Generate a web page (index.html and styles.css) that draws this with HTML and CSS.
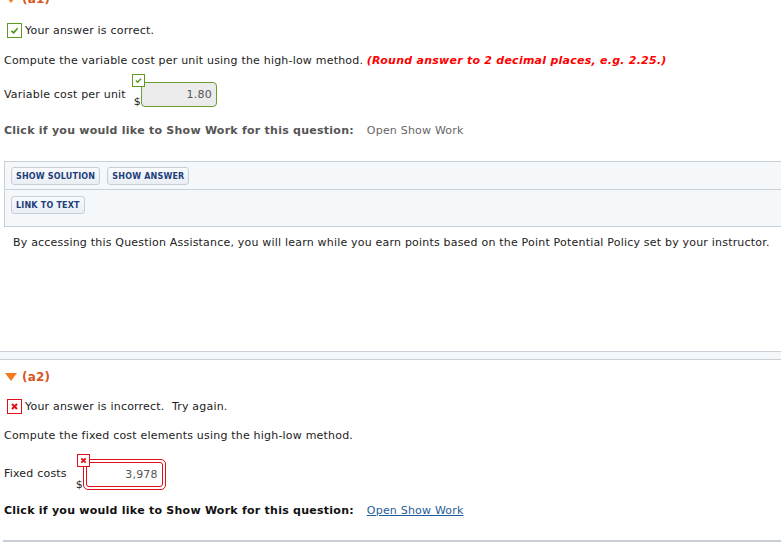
FILE: index.html
```html
<!DOCTYPE html>
<html>
<head>
<meta charset="utf-8">
<link rel="stylesheet" href="styles.css">
</head>
<body>
<div class="page">
  <div class="part-head part-head-first"><span class="tri"></span><span class="part-label">(a1)</span></div>
  <div class="status">
    <span class="status-icon ok"><svg width="11" height="11" viewBox="0 0 11 11"><path d="M2.5 5.8 L4.6 7.8 L8.6 3.2" fill="none" stroke="#4f8f17" stroke-width="1.6"/></svg></span>
    <span>Your answer is correct.</span>
  </div>
  <p class="q q1">Compute the variable cost per unit using the high-low method. <em class="hint">(Round answer to 2 decimal places, e.g. 2.25.)</em></p>
  <div class="answer answer1">
    <span class="answer-label">Variable cost per unit</span>
    <span class="field field1">
      <span class="mark ok-mark"><svg width="9" height="9" viewBox="0 0 9 9"><path d="M1.8 4.6 L3.6 6.3 L7 2.8" fill="none" stroke="#5a9a1c" stroke-width="1.4"/></svg></span>
      <span class="dollar">$</span>
      <span class="box box-ok">1.80</span>
    </span>
  </div>
  <div class="showwork sw1"><b>Click if you would like to Show Work for this question:</b><span class="sw-link-grey">Open Show Work</span></div>

  <div class="assist">
    <div class="assist-row row-a">
      <span class="btn">SHOW SOLUTION</span>
      <span class="btn">SHOW ANSWER</span>
    </div>
    <div class="assist-row row-b">
      <span class="btn">LINK TO TEXT</span>
    </div>
  </div>
  <p class="policy">By accessing this Question Assistance, you will learn while you earn points based on the Point Potential Policy set by your instructor.</p>

  <div class="separator"></div>

  <div class="part-head part-head-second"><span class="tri"></span><span class="part-label">(a2)</span></div>
  <div class="status status2">
    <span class="status-icon bad"><svg width="11" height="11" viewBox="0 0 11 11"><path d="M3 3 L8 8 M8 3 L3 8" fill="none" stroke="#e0101a" stroke-width="2"/></svg></span>
    <span>Your answer is incorrect.&nbsp; Try again.</span>
  </div>
  <p class="q q2">Compute the fixed cost elements using the high-low method.</p>
  <div class="answer answer2">
    <span class="answer-label label2">Fixed costs</span>
    <span class="field field2">
      <span class="mark bad-mark"><svg width="9" height="9" viewBox="0 0 9 9"><path d="M2.3 2.3 L6.7 6.7 M6.7 2.3 L2.3 6.7" fill="none" stroke="#e0101a" stroke-width="1.8"/></svg></span>
      <span class="dollar">$</span>
      <span class="ring"><span class="box box-bad">3,978</span></span>
    </span>
  </div>
  <div class="showwork sw2"><b>Click if you would like to Show Work for this question:</b><a class="sw-link" href="#">Open Show Work</a></div>
  <div class="bottom-line"></div>
</div>
</body>
</html>
```

FILE: styles.css
```css
html, body {
  margin: 0;
  padding: 0;
  overflow: hidden;
  background: #fff;
}
body {
  font-family: "DejaVu Sans", Verdana, sans-serif;
  font-size: 11px;
  letter-spacing: 0.2px;
  color: #222;
}
.page {
  margin-top: -9px;
}
p { margin: 0; }

.part-head {
  height: 16px;
  line-height: 16px;
  display: flex;
  align-items: center;
  padding-left: 5px;
}
.tri {
  width: 0;
  height: 0;
  border-left: 6px solid transparent;
  border-right: 6px solid transparent;
  border-top: 8px solid #f47a1f;
  margin-right: 5px;
}
.part-label {
  font-weight: bold;
  font-size: 12px;
  color: #d8561e;
}

.status {
  display: flex;
  align-items: center;
  height: 15px;
  margin-top: 16px;
  padding-left: 7px;
}
.status2 { margin-top: 14px; }
.status-icon {
  width: 15px;
  height: 15px;
  box-sizing: border-box;
  display: inline-flex;
  align-items: center;
  justify-content: center;
  margin-right: 3px;
  background: #fff;
}
.status-icon.ok { border: 1.5px solid #5f9b22; }
.status-icon.bad { border: 1.5px solid #e0101a; }

.q {
  line-height: 14px;
  padding-left: 4px;
  margin-top: 16px;
}
.q2 { margin-top: 15px; }
.hint {
  color: #f00;
  font-weight: bold;
  font-style: italic;
  letter-spacing: 0.25px;
}

.answer {
  display: flex;
  align-items: flex-start;
  padding-left: 4px;
}
.answer1 { margin-top: 6px; }
.answer2 { margin-top: 11px; }
.answer-label {
  margin-top: 8px;
  height: 25px;
  line-height: 25px;
  margin-right: 9px;
}
.label2 {
  margin-top: 4px;
  height: 32px;
  line-height: 32px;
}
.field {
  position: relative;
  display: inline-flex;
  align-items: flex-end;
}
.field1 { padding-top: 8px; margin-left: -1px; }
.field2 { padding-top: 5px; margin-left: 0; }
.mark {
  position: absolute;
  top: 0;
  width: 13px;
  height: 13px;
  box-sizing: border-box;
  display: flex;
  align-items: center;
  justify-content: center;
  background: #fff;
  z-index: 2;
}
.ok-mark { left: -2px; border: 1px solid #5a9a1c; }
.bad-mark { left: 1px; border: 1px solid #e0101a; }
.dollar {
  line-height: 12px;
  width: 7px;
  margin-bottom: -1px;
  letter-spacing: 0;
}
.box {
  display: block;
  width: 76px;
  height: 25px;
  box-sizing: border-box;
  line-height: 23px;
  text-align: right;
  padding-right: 4px;
  color: #555;
  font-size: 11px;
}
.box-ok {
  border: 1px solid #6e9c35;
  border-radius: 4px;
  background: #ebebeb;
}
.ring {
  display: block;
  border: 1px solid #e0101a;
  border-radius: 5px;
  padding: 2px;
  background: #fff;
}
.box-bad {
  width: 77px;
  border: 1px solid #e0101a;
  border-radius: 3px;
  background: #fff;
}

.showwork {
  line-height: 14px;
  padding-left: 4px;
  display: flex;
}
.showwork b { margin-right: 13px; letter-spacing: 0.25px; }
.sw1 { margin-top: 17px; color: #555; }
.sw2 { margin-top: 14px; color: #111; }
.sw-link-grey { color: #666; }
.sw-link { color: #1f5c99; text-decoration: underline; }

.assist {
  margin-top: 23px;
  margin-left: 4px;
  border: 1px solid #c8d0da;
  border-right: 0;
  background: #f5f8fb;
}
.assist-row {
  display: flex;
  gap: 7px;
  padding-left: 6px;
}
.row-a {
  height: 28px;
  box-sizing: border-box;
  padding-top: 5px;
  border-bottom: 1px solid #c8d0da;
}
.row-b {
  height: 36px;
  box-sizing: border-box;
  padding-top: 6px;
}
.btn {
  display: inline-flex;
  align-items: center;
  height: 18px;
  box-sizing: border-box;
  padding: 0 4px;
  border: 1px solid #c6ced8;
  border-radius: 3px;
  background: linear-gradient(#f8fafc, #e9eef4);
  color: #1d3f7a;
  font-weight: bold;
  font-size: 8px;
  letter-spacing: 0.2px;
}

.policy {
  margin-top: 9px;
  padding-left: 13px;
  line-height: 14px;
}

.separator {
  margin-top: 101px;
  height: 7px;
  border-top: 1px solid #c9d0d8;
  border-bottom: 1px solid #c9d0d8;
  background: #f4f7fa;
}
.part-head-second { margin-top: 9px; }

.bottom-line {
  margin-top: 22px;
  margin-left: 3px;
  height: 0;
  border-top: 2px solid #c7ced6;
}
```
